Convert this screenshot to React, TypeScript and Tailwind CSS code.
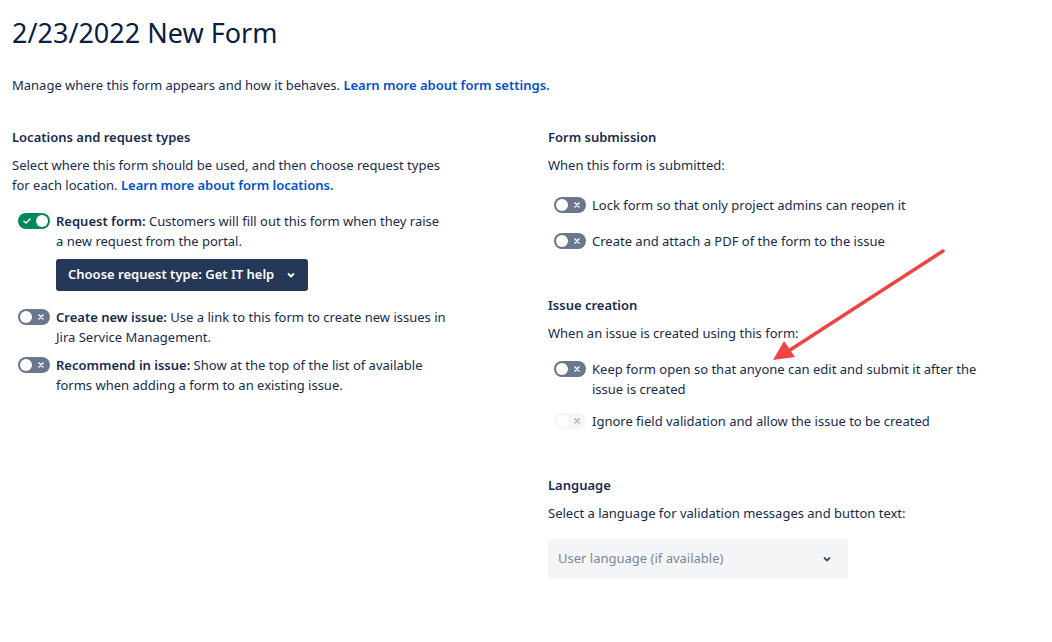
import { ReactNode } from "react";

const font = { fontFamily: '"Noto Sans", "Open Sans", sans-serif' };

function Toggle({ on = false, disabled = false }: { on?: boolean; disabled?: boolean }) {
  const bg = on ? "bg-[#00875a]" : disabled ? "bg-[#f4f5f7]" : "bg-[#6b778c]";
  const mark = disabled ? "#a5adba" : "#ffffff";
  return (
    <div className={`relative h-4 w-8 shrink-0 rounded-full ${bg}`}>
      <span
        className={`absolute top-[2px] h-3 w-3 rounded-full bg-white ${on ? "right-[2px]" : "left-[2px]"}`}
      />
      {on ? (
        <svg className="absolute left-[5px] top-[4px]" width="8" height="8" viewBox="0 0 8 8">
          <path d="M1 4.2 3 6 7 2" fill="none" stroke={mark} strokeWidth="1.5" strokeLinecap="round" strokeLinejoin="round" />
        </svg>
      ) : (
        <svg className="absolute right-[5px] top-[4px]" width="8" height="8" viewBox="0 0 8 8">
          <path d="M2 2 6 6 M6 2 2 6" fill="none" stroke={mark} strokeWidth="1.5" strokeLinecap="round" />
        </svg>
      )}
    </div>
  );
}

function ToggleRow({ on, disabled, children, after, className = "", textClass = "" }: { on?: boolean; disabled?: boolean; children: ReactNode; after?: ReactNode; className?: string; textClass?: string }) {
  return (
    <div className={`flex items-start gap-1.5 pl-1.5 ${className}`}>
      <div className="pt-[2px]">
        <Toggle on={on} disabled={disabled} />
      </div>
      <div>
        <p className={`text-[13px] leading-5 ${textClass}`}>{children}</p>
        {after}
      </div>
    </div>
  );
}

function Chevron({ color }: { color: string }) {
  return (
    <svg width="10" height="10" viewBox="0 0 10 10">
      <path d="M2.5 4 5 6.5 7.5 4" fill="none" stroke={color} strokeWidth="1.8" strokeLinecap="round" strokeLinejoin="round" />
    </svg>
  );
}

export default function App() {
  return (
    <div className="relative min-h-[642px] w-[1052px] bg-white px-3 text-[#172b4d]" style={font}>
      <h1 className="pt-[13px] text-[27px] font-normal leading-10 text-[#091e42]">2/23/2022 New Form</h1>
      <p className="mt-[22px] text-[13px] leading-5">
        Manage where this form appears and how it behaves.{" "}
        <span className="font-semibold text-[#0052cc]">Learn more about form settings.</span>
      </p>

      <div className="mt-8 grid grid-cols-[448px_448px] gap-x-[88px]">
        {/* left column */}
        <div>
          <h2 className="text-[13px] font-semibold leading-5">Locations and request types</h2>
          <p className="mt-2 text-[13px] leading-5">
            Select where this form should be used, and then choose request types for each location.{" "}
            <span className="font-semibold text-[#0052cc]">Learn more about form locations.</span>
          </p>

          <ToggleRow
            on
            className="mt-4"
            textClass="max-w-[390px]"
            after={
              <button className="mt-2 flex h-8 items-center gap-3 rounded-[3px] bg-[#253858] px-3 text-[13px] font-semibold text-white">
                Choose request type: Get IT help
                <Chevron color="#ffffff" />
              </button>
            }
          >
            <span className="font-semibold">Request form:</span> Customers will fill out this form when they raise a
            new request from the portal.
          </ToggleRow>

          <ToggleRow className="mt-4">
            <span className="font-semibold">Create new issue:</span> Use a link to this form to create new issues in
            Jira Service Management.
          </ToggleRow>

          <ToggleRow className="mt-2">
            <span className="font-semibold">Recommend in issue:</span> Show at the top of the list of available forms
            when adding a form to an existing issue.
          </ToggleRow>
        </div>

        {/* right column */}
        <div>
          <h2 className="text-[13px] font-semibold leading-5">Form submission</h2>
          <p className="mt-2 text-[13px] leading-5">When this form is submitted:</p>
          <ToggleRow className="mt-5">Lock form so that only project admins can reopen it</ToggleRow>
          <ToggleRow className="mt-4">Create and attach a PDF of the form to the issue</ToggleRow>

          <h2 className="mt-11 text-[13px] font-semibold leading-5">Issue creation</h2>
          <p className="mt-2 text-[13px] leading-5">When an issue is created using this form:</p>
          <ToggleRow className="mt-4">
            Keep form open so that anyone can edit and submit it after the issue is created
          </ToggleRow>
          <ToggleRow disabled className="mt-3">
            Ignore field validation and allow the issue to be created
          </ToggleRow>

          <h2 className="mt-11 text-[13px] font-semibold leading-5">Language</h2>
          <p className="mt-2 text-[13px] leading-5">Select a language for validation messages and button text:</p>
          <div className="mt-4 flex h-10 w-[300px] items-center justify-between rounded-[3px] bg-[#f4f5f7] pl-[10px] pr-4 text-[13px] text-[#7a869a]">
            <span>User language (if available)</span>
            <Chevron color="#42526e" />
          </div>
        </div>
      </div>

      {/* annotation arrow */}
      <svg className="pointer-events-none absolute left-0 top-0" width="1052" height="642">
        <line x1="943" y1="251" x2="790" y2="350" stroke="#ef4444" strokeWidth="3.5" strokeLinecap="round" />
        <polygon points="773,360 784,341 795,357" fill="#ef4444" />
      </svg>
    </div>
  );
}
